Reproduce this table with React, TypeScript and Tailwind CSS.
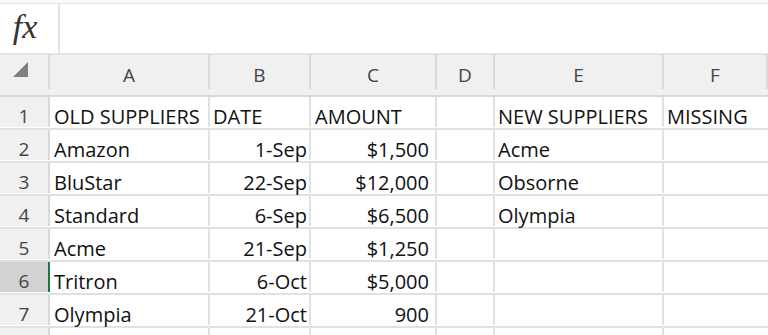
const columns = ["A", "B", "C", "D", "E", "F"];

const rows: { a: string; b: string; c: string; e: string; f: string }[] = [
  { a: "OLD SUPPLIERS", b: "DATE", c: "AMOUNT", e: "NEW SUPPLIERS", f: "MISSING" },
  { a: "Amazon", b: "1-Sep", c: "$1,500", e: "Acme", f: "" },
  { a: "BluStar", b: "22-Sep", c: "$12,000", e: "Obsorne", f: "" },
  { a: "Standard", b: "6-Sep", c: "$6,500", e: "Olympia", f: "" },
  { a: "Acme", b: "21-Sep", c: "$1,250", e: "", f: "" },
  { a: "Tritron", b: "6-Oct", c: "$5,000", e: "", f: "" },
  { a: "Olympia", b: "21-Oct", c: "900", e: "", f: "" },
];

const grid = "grid grid-cols-[50px_160px_101px_126px_58px_169px_1fr]";

export default function App() {
  return (
    <div
      className="w-[768px] h-[335px] overflow-hidden bg-white text-[#111]"
      style={{ fontFamily: '"Open Sans", "Liberation Sans", sans-serif' }}
    >
      {/* formula bar */}
      <div className="h-[3px] bg-[#fafafa]" />
      <div className="flex h-[52px] border-t border-b-2 border-[#e3e3e3]">
        <div className="w-[60px] flex items-center justify-center border-r-2 border-[#e3e3e3]">
          <span
            className="italic text-[34px] leading-none text-[#333] -mt-1 -ml-2"
            style={{ fontFamily: '"Liberation Serif", serif' }}
          >
            fx
          </span>
        </div>
        <div className="flex-1" />
      </div>

      {/* column headers */}
      <div className={`${grid} h-[42px] bg-[#f0f0f0] border-b-2 border-[#d9d9d9]`}>
        <div className="flex items-end justify-start pl-[13px] pb-[12px] border-r-2 border-[#d9d9d9]">
          <svg width="15" height="15" viewBox="0 0 15 15">
            <polygon points="15,0 15,15 0,15" fill="#7f7f7f" />
          </svg>
        </div>
        {columns.map((c) => (
          <div
            key={c}
            className="flex items-center justify-center pt-[7px] text-[19px] leading-none text-[#444] border-r-2 border-[#d9d9d9]"
          >
            {c}
          </div>
        ))}
        <div />
      </div>

      {/* data rows */}
      {rows.map((r, i) => {
        const n = i + 1;
        const active = n === 6;
        return (
          <div key={n} className={`${grid} h-[33px] border-b-2 border-[#e1e1e1] text-[20px] leading-none`}>
            <div
              className={`flex items-center justify-center pt-[9px] text-[19px] text-[#444] border-r-2 ${
                active ? "bg-[#d2d2d2] border-[#217346]" : "bg-[#f0f0f0] border-[#d9d9d9]"
              }`}
            >
              {n}
            </div>
            <div className="flex items-center pt-[9px] pl-[4px] border-r-2 border-[#e1e1e1] whitespace-nowrap">{r.a}</div>
            <div className={`flex items-center pt-[9px] border-r-2 border-[#e1e1e1] whitespace-nowrap ${n === 1 ? "pl-[3px]" : "justify-end pr-[2px]"}`}>
              {r.b}
            </div>
            <div className={`flex items-center pt-[9px] border-r-2 border-[#e1e1e1] whitespace-nowrap ${n === 1 ? "pl-[4px]" : "justify-end pr-[6px]"}`}>
              {r.c}
            </div>
            <div className="border-r-2 border-[#e1e1e1]" />
            <div className="flex items-center pt-[9px] pl-[3px] border-r-2 border-[#e1e1e1] whitespace-nowrap">{r.e}</div>
            <div className="flex items-center pt-[9px] pl-[3px] whitespace-nowrap">{r.f}</div>
            <div />
          </div>
        );
      })}

      {/* partial row 8 */}
      <div className={`${grid} h-[33px]`}>
        <div className="bg-[#f0f0f0] border-r-2 border-[#d9d9d9]" />
        <div className="border-r-2 border-[#e1e1e1]" />
        <div className="border-r-2 border-[#e1e1e1]" />
        <div className="border-r-2 border-[#e1e1e1]" />
        <div className="border-r-2 border-[#e1e1e1]" />
        <div className="border-r-2 border-[#e1e1e1]" />
        <div />
        <div />
      </div>
    </div>
  );
}
